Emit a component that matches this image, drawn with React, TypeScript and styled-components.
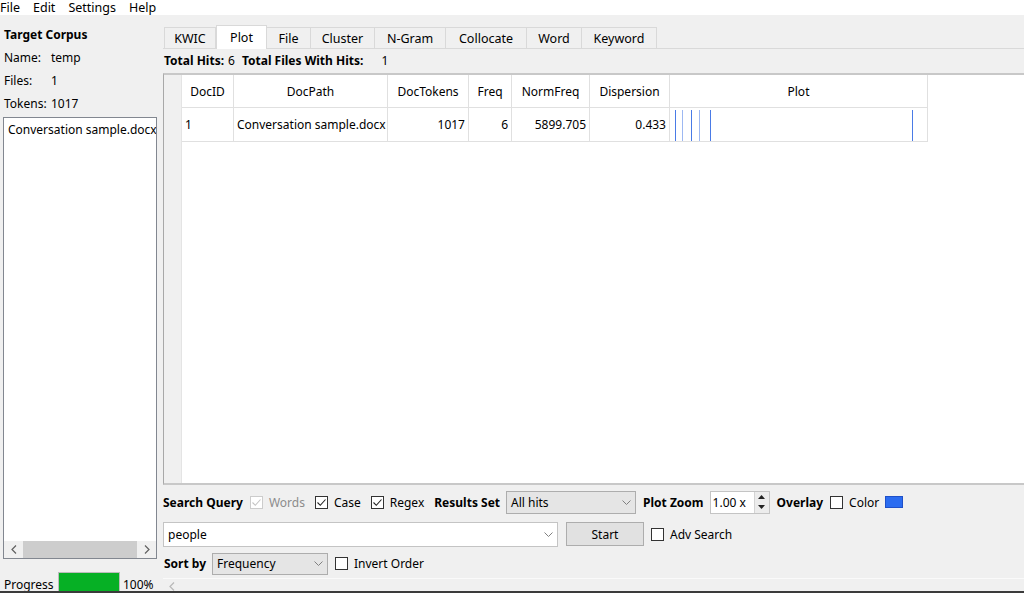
import React from 'react';
import styled, { createGlobalStyle } from 'styled-components';

const GlobalStyle = createGlobalStyle`
  html, body {
    margin: 0;
    padding: 0;
    background: #f0f0f0;
  }
  body {
    font-family: "Noto Sans", "Open Sans", sans-serif;
    font-size: 12px;
    color: #000;
  }
`;

const Window = styled.div`
  width: 1024px;
  height: 593px;
  overflow: hidden;
  display: flex;
  flex-direction: column;
  background: #f0f0f0;
`;

const MenuBar = styled.div`
  height: 15px;
  background: #fff;
  display: flex;
  gap: 13px;
  font-size: 12.5px;
  line-height: 15px;
  flex: none;
`;

const MenuItem = styled.span`
  white-space: nowrap;
`;

const Main = styled.div`
  flex: 1;
  display: flex;
  min-height: 0;
`;

const LeftPanel = styled.div`
  width: 160px;
  flex: none;
  display: flex;
  flex-direction: column;
  padding-top: 8px;
`;

const PanelTitle = styled.div`
  height: 23px;
  line-height: 23px;
  padding-left: 4px;
  font-weight: bold;
`;

const InfoGrid = styled.div`
  display: grid;
  grid-template-columns: 47px 1fr;
  grid-auto-rows: 23px;
  align-items: center;
  padding-left: 4px;
`;

const CorpusList = styled.div`
  margin: 2px 0 0 3px;
  width: 154px;
  height: 445px;
  box-sizing: border-box;
  border: 1px solid #828790;
  background: #fff;
  display: flex;
  flex-direction: column;
  overflow: hidden;
`;

const ListItem = styled.div`
  padding: 3px 0 0 4px;
  white-space: nowrap;
  overflow: hidden;
  flex: 1;
`;

const HScroll = styled.div`
  height: 17px;
  flex: none;
  display: flex;
  align-items: center;
  background: #f0f0f0;
`;

const ScrollArrow = styled.span`
  width: 19px;
  height: 17px;
  display: flex;
  align-items: center;
  justify-content: center;
  flex: none;
`;

const ScrollThumb = styled.div`
  flex: 1;
  height: 17px;
  background: #cdcdcd;
`;

const ProgressRow = styled.div`
  margin-top: 12px;
  display: flex;
  align-items: flex-start;
  padding-left: 4px;
  height: 20px;
`;

const ProgressLabel = styled.span`
  width: 54px;
  line-height: 22px;
  margin-top: 3px;
`;

const ProgressBar = styled.div`
  width: 62px;
  height: 20px;
  margin-top: 1px;
  background: #06b025;
  border: 1px solid #bcbcbc;
  box-sizing: border-box;
`;

const ProgressText = styled.span`
  margin-left: 3px;
  line-height: 22px;
  margin-top: 3px;
`;

const RightPanel = styled.div`
  flex: 1;
  margin-left: 3px;
  display: flex;
  flex-direction: column;
  min-width: 0;
`;

const TabBar = styled.div`
  display: flex;
  align-items: flex-end;
  height: 33px;
  padding-left: 1px;
  border-bottom: 1px solid #d9d9d9;
  flex: none;
`;

const Tab = styled.div<{ $w: number; $active?: boolean }>`
  width: ${p => p.$w}px;
  height: ${p => (p.$active ? 24 : 21)}px;
  box-sizing: border-box;
  border: 1px solid #d9d9d9;
  border-bottom: none;
  border-left-width: ${p => (p.$active ? 1 : 0)}px;
  background: ${p => (p.$active ? '#fff' : '#f0f0f0')};
  margin-bottom: ${p => (p.$active ? -1 : 0)}px;
  display: flex;
  align-items: center;
  justify-content: center;
  font-size: 12.5px;
  padding-top: ${p => (p.$active ? 0 : 1)}px;
  &:first-child {
    border-left-width: 1px;
  }
`;

const HitsRow = styled.div`
  height: 23px;
  display: flex;
  align-items: center;
  padding-left: 1px;
  flex: none;
  padding-bottom: 1px;
`;

const Bold = styled.span<{ $ml?: number }>`
  font-weight: bold;
  white-space: nowrap;
  margin-left: ${p => p.$ml ?? 0}px;
`;

const Value = styled.span<{ $ml: number }>`
  margin-left: ${p => p.$ml}px;
`;

const TableFrame = styled.div`
  height: 412px;
  flex: none;
  box-sizing: border-box;
  border-top: 2px solid #c8c8c8;
  border-left: 1px solid #a8a8a8;
  border-bottom: 2px solid #c8c8c8;
  background: #fff;
  display: flex;
`;

const RowHeaderStrip = styled.div`
  width: 17px;
  flex: none;
  background: #f0f0f0;
  border-right: 1px solid #e4e4e4;
`;

const Grid = styled.div`
  display: grid;
  grid-template-columns: 52px 154px 81px 43px 78px 80px 258px;
  grid-auto-rows: 33px 34px;
  align-self: flex-start;
`;

const HeadCell = styled.div`
  background: #fff;
  border-right: 1px solid #e0e0e0;
  border-bottom: 1px solid #e0e0e0;
  display: flex;
  align-items: center;
  justify-content: center;
  white-space: nowrap;
`;

const Cell = styled.div<{ $right?: boolean }>`
  border-right: 1px solid #e0e0e0;
  border-bottom: 1px solid #e0e0e0;
  display: flex;
  align-items: center;
  justify-content: ${p => (p.$right ? 'flex-end' : 'flex-start')};
  padding: 0 3px;
  white-space: nowrap;
  overflow: hidden;
`;

const PlotCell = styled.div`
  border-right: 1px solid #e0e0e0;
  border-bottom: 1px solid #e0e0e0;
  position: relative;
`;

const Controls = styled.div`
  display: flex;
  flex-direction: column;
  flex: none;
`;

const ControlRow = styled.div<{ $h: number }>`
  height: ${p => p.$h}px;
  display: flex;
  align-items: center;
  white-space: nowrap;
`;

const CheckLabel = styled.label<{ $disabled?: boolean; $ml?: number }>`
  display: flex;
  align-items: center;
  gap: 6px;
  margin-left: ${p => p.$ml ?? 0}px;
  color: ${p => (p.$disabled ? '#8c8c8c' : '#000')};
`;

const Box = styled.span<{ $disabled?: boolean }>`
  width: 13px;
  height: 13px;
  box-sizing: border-box;
  border: 1px solid ${p => (p.$disabled ? '#cccccc' : '#333')};
  background: #fff;
  display: inline-flex;
  align-items: center;
  justify-content: center;
`;

const Combo = styled.div<{ $w: number; $h: number; $ml: number; $editable?: boolean }>`
  width: ${p => p.$w}px;
  height: ${p => p.$h}px;
  margin-left: ${p => p.$ml}px;
  box-sizing: border-box;
  border: 1px solid ${p => (p.$editable ? '#c4c4c4' : '#adadad')};
  background: ${p => (p.$editable ? '#fff' : '#e5e5e5')};
  display: flex;
  align-items: center;
  justify-content: space-between;
  padding: 0 4px 0 4px;
`;

const SpinBox = styled.div`
  width: 60px;
  height: 23px;
  margin-left: 6px;
  box-sizing: border-box;
  border: 1px solid #c4c4c4;
  background: #fff;
  display: flex;
  align-items: stretch;
`;

const SpinText = styled.span`
  flex: 1;
  padding-left: 2px;
  display: flex;
  align-items: center;
`;

const SpinButtons = styled.div`
  width: 14px;
  display: flex;
  flex-direction: column;
  background: #ececec;
  border-left: 1px solid #d4d4d4;
`;

const SpinHalf = styled.div`
  flex: 1;
  display: flex;
  align-items: center;
  justify-content: center;
`;

const Swatch = styled.span`
  width: 18px;
  height: 12px;
  margin-left: 6px;
  box-sizing: border-box;
  background: #2b6cf0;
  border: 1px solid #1f50c8;
`;

const Button = styled.div`
  width: 78px;
  height: 24px;
  margin-left: 8px;
  box-sizing: border-box;
  border: 1px solid #adadad;
  background: #e1e1e1;
  display: flex;
  align-items: center;
  justify-content: center;
`;

const BottomScroll = styled.div`
  height: 14px;
  border-top: 1px solid #fafafa;
  display: flex;
  align-items: center;
  padding-left: 6px;
`;

const Taskbar = styled.div`
  height: 2px;
  flex: none;
  background: #3b3b3b;
`;

function Chevron() {
  return (
    <svg width="9" height="5" viewBox="0 0 9 5">
      <path d="M0.5 0.5 L4.5 4.5 L8.5 0.5" fill="none" stroke="#808080" strokeWidth="1" />
    </svg>
  );
}

function ArrowGlyph({ dir, color }: { dir: 'left' | 'right'; color: string }) {
  const d = dir === 'left' ? 'M5 0.5 L1 4.5 L5 8.5' : 'M1 0.5 L5 4.5 L1 8.5';
  return (
    <svg width="6" height="9" viewBox="0 0 6 9">
      <path d={d} fill="none" stroke={color} strokeWidth="1.2" />
    </svg>
  );
}

function Check({ label, checked, disabled, ml }: { label: string; checked?: boolean; disabled?: boolean; ml?: number }) {
  return (
    <CheckLabel $disabled={disabled} $ml={ml}>
      <Box $disabled={disabled}>
        {checked && (
          <svg width="11" height="11" viewBox="0 0 11 11">
            <path d="M1.5 5.5 L4.3 8.3 L9.5 2.5" fill="none" stroke={disabled ? '#c4c4c4' : '#222'} strokeWidth="1.1" />
          </svg>
        )}
      </Box>
      {label}
    </CheckLabel>
  );
}

const tabs: [string, number][] = [
  ['KWIC', 52],
  ['Plot', 51],
  ['File', 44],
  ['Cluster', 64],
  ['N-Gram', 71],
  ['Collocate', 81],
  ['Word', 55],
  ['Keyword', 75],
];

const headers = ['DocID', 'DocPath', 'DocTokens', 'Freq', 'NormFreq', 'Dispersion', 'Plot'];

const hits = [
  { x: 5, c: '#4a7be6' },
  { x: 12, c: '#9db8f2' },
  { x: 21, c: '#4a7be6' },
  { x: 29, c: '#9db8f2' },
  { x: 40, c: '#4a7be6' },
];

function DispersionPlot() {
  return (
    <svg width="258" height="33" style={{ position: 'absolute', left: 0, top: 0 }}>
      {hits.map(h => (
        <line key={h.x} x1={h.x + 0.5} y1={2} x2={h.x + 0.5} y2={33} stroke={h.c} strokeWidth="1" />
      ))}
      <line x1={242.5} y1={2} x2={242.5} y2={33} stroke="#4a7be6" strokeWidth="1" />
    </svg>
  );
}

export default function App() {
  return (
    <>
      <GlobalStyle />
      <Window>
        <MenuBar>
          <MenuItem>File</MenuItem>
          <MenuItem>Edit</MenuItem>
          <MenuItem>Settings</MenuItem>
          <MenuItem>Help</MenuItem>
        </MenuBar>
        <Main>
          <LeftPanel>
            <PanelTitle>Target Corpus</PanelTitle>
            <InfoGrid>
              <span>Name:</span>
              <span>temp</span>
              <span>Files:</span>
              <span>1</span>
              <span>Tokens:</span>
              <span>1017</span>
            </InfoGrid>
            <CorpusList>
              <ListItem>Conversation sample.docx</ListItem>
              <HScroll>
                <ScrollArrow>
                  <ArrowGlyph dir="left" color="#606060" />
                </ScrollArrow>
                <ScrollThumb />
                <ScrollArrow>
                  <ArrowGlyph dir="right" color="#606060" />
                </ScrollArrow>
              </HScroll>
            </CorpusList>
            <ProgressRow>
              <ProgressLabel>Progress</ProgressLabel>
              <ProgressBar />
              <ProgressText>100%</ProgressText>
            </ProgressRow>
          </LeftPanel>

          <RightPanel>
            <TabBar>
              {tabs.map(([name, w]) => (
                <Tab key={name} $w={w} $active={name === 'Plot'}>
                  {name}
                </Tab>
              ))}
            </TabBar>
            <HitsRow>
              <Bold>Total Hits:</Bold>
              <Value $ml={4}>6</Value>
              <Bold $ml={7}>Total Files With Hits:</Bold>
              <Value $ml={18}>1</Value>
            </HitsRow>
            <TableFrame>
              <RowHeaderStrip />
              <Grid>
                {headers.map(h => (
                  <HeadCell key={h}>{h}</HeadCell>
                ))}
                <Cell>1</Cell>
                <Cell>Conversation sample.docx</Cell>
                <Cell $right>1017</Cell>
                <Cell $right>6</Cell>
                <Cell $right>5899.705</Cell>
                <Cell $right>0.433</Cell>
                <PlotCell>
                  <DispersionPlot />
                </PlotCell>
              </Grid>
            </TableFrame>
            <Controls>
              <ControlRow $h={34}>
                <Bold>Search Query</Bold>
                <Check label="Words" checked disabled ml={7} />
                <Check label="Case" checked ml={10} />
                <Check label="Regex" checked ml={10} />
                <Bold $ml={10}>Results Set</Bold>
                <Combo $w={130} $h={23} $ml={6}>
                  All hits
                  <Chevron />
                </Combo>
                <Bold $ml={7}>Plot Zoom</Bold>
                <SpinBox>
                  <SpinText>1.00 x</SpinText>
                  <SpinButtons>
                    <SpinHalf>
                      <svg width="7" height="4" viewBox="0 0 7 4">
                        <path d="M0 4 L3.5 0 L7 4 Z" fill="#222" />
                      </svg>
                    </SpinHalf>
                    <SpinHalf>
                      <svg width="7" height="4" viewBox="0 0 7 4">
                        <path d="M0 0 L3.5 4 L7 0 Z" fill="#222" />
                      </svg>
                    </SpinHalf>
                  </SpinButtons>
                </SpinBox>
                <Bold $ml={7}>Overlay</Bold>
                <Check label="Color" ml={7} />
                <Swatch />
              </ControlRow>
              <ControlRow $h={30}>
                <Combo $w={395} $h={25} $ml={0} $editable>
                  people
                  <Chevron />
                </Combo>
                <Button>Start</Button>
                <Check label="Adv Search" ml={7} />
              </ControlRow>
              <ControlRow $h={29}>
                <Bold $ml={1}>Sort by</Bold>
                <Combo $w={116} $h={22} $ml={6}>
                  Frequency
                  <Chevron />
                </Combo>
                <Check label="Invert Order" ml={7} />
              </ControlRow>
              <BottomScroll>
                <ArrowGlyph dir="left" color="#b8b8b8" />
              </BottomScroll>
            </Controls>
          </RightPanel>
        </Main>
        <Taskbar />
      </Window>
    </>
  );
}
